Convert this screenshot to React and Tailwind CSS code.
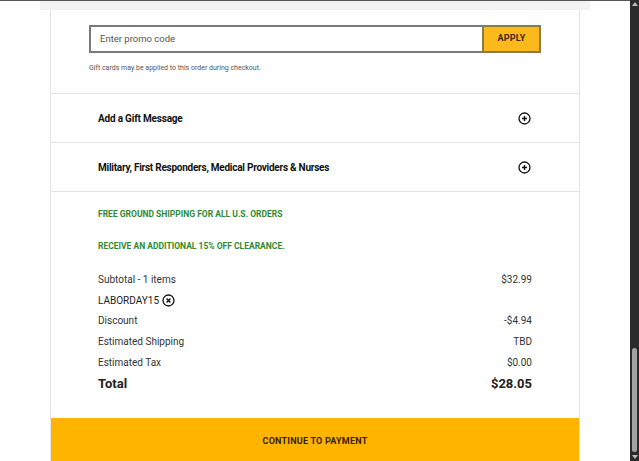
import React from 'react'

const font = { fontFamily: '"Liberation Sans Narrow", "Roboto", "Liberation Sans", sans-serif' }

const PlusCircle = () => (
    <svg width="13" height="13" viewBox="0 0 13 13" fill="none">
        <circle cx="6.5" cy="6.5" r="5.5" stroke="#111" strokeWidth="1.3" />
        <path d="M6.5 4v5M4 6.5h5" stroke="#111" strokeWidth="1.4" />
    </svg>
)

const XCircle = () => (
    <svg width="13" height="13" viewBox="0 0 13 13" fill="none">
        <circle cx="6.5" cy="6.5" r="5.5" stroke="#111" strokeWidth="1.3" />
        <path d="M4.6 4.6l3.8 3.8M8.4 4.6l-3.8 3.8" stroke="#111" strokeWidth="1.4" />
    </svg>
)

const Row = ({ label, value }) => (
    <div className="flex h-[21px] items-center justify-between text-[10px] text-[#333]">
        <span>{label}</span>
        <span>{value}</span>
    </div>
)

export default function App() {
    return (
        <div className="flex h-[461px] w-[639px] overflow-hidden bg-white" style={font}>
            {/* page */}
            <div className="flex flex-1 flex-col overflow-hidden border-t border-[#555]">
                <div className="mx-[40px] h-[9px] shrink-0 bg-[#f3f3f3]" />
                <div className="mx-[50px] flex flex-col border-x border-[#e4e4e4]">
                    {/* promo */}
                    <div className="px-[38px] pt-[15px] pb-[19px]">
                        <div className="flex h-[28px]">
                            <div className="flex flex-1 items-center border-2 border-r-0 border-[#7a7a7a] pl-[9px] text-[9.5px] text-[#555]">
                                Enter promo code
                            </div>
                            <button className="w-[59px] border-2 border-[#8b7a4a] bg-[#fbb91c] text-[9px] font-bold tracking-wide text-[#3a2a10]">
                                APPLY
                            </button>
                        </div>
                        <p className="mt-[10px] text-[7px] text-[#555]">Gift cards may be applied to this order during checkout.</p>
                    </div>

                    {/* accordions */}
                    <div className="flex h-[50px] items-center justify-between border-y border-[#e4e4e4] pt-[2px] pl-[47px] pr-[48px]">
                        <span className="text-[10px] font-bold tracking-[-0.2px] text-[#111]">Add a Gift Message</span>
                        <PlusCircle />
                    </div>
                    <div className="flex h-[49px] items-center justify-between border-b border-[#e4e4e4] pt-[2px] pl-[47px] pr-[48px]">
                        <span className="text-[10px] font-bold tracking-[-0.25px] text-[#111]">Military, First Responders, Medical Providers &amp; Nurses</span>
                        <PlusCircle />
                    </div>

                    {/* summary */}
                    <div className="flex h-[226px] shrink-0 flex-col px-[47px] pt-[16px]">
                        <p className="text-[8.5px] font-bold text-[#2e8b2e]">FREE GROUND SHIPPING FOR ALL U.S. ORDERS</p>
                        <p className="mt-[20px] text-[8.5px] font-bold text-[#2e8b2e]">RECEIVE AN ADDITIONAL 15% OFF CLEARANCE.</p>
                        <div className="mt-[16px]">
                            <Row label="Subtotal - 1 items" value="$32.99" />
                            <div className="flex h-[20px] items-center gap-[3px] text-[10px] text-[#222]">
                                <span>LABORDAY15</span>
                                <XCircle />
                            </div>
                            <Row label="Discount" value="-$4.94" />
                            <Row label="Estimated Shipping" value="TBD" />
                            <Row label="Estimated Tax" value="$0.00" />
                            <div className="flex h-[21px] items-center justify-between text-[13px] font-bold text-[#222]">
                                <span>Total</span>
                                <span>$28.05</span>
                            </div>
                        </div>
                    </div>

                    <button className="h-[48px] shrink-0 bg-[#ffb400] pt-[1px] text-[9px] font-bold tracking-wide text-[#3a1a0a]">
                        CONTINUE TO PAYMENT
                    </button>
                </div>
            </div>

            {/* scrollbar */}
            <div className="flex w-[9px] flex-col items-center bg-[#2b2b2b] py-[2px]">
                <div className="h-0 w-0 border-x-[3px] border-b-[4px] border-x-transparent border-b-[#bbb]" />
                <div className="flex-1" />
                <div className="h-[104px] w-[5px] rounded-full bg-[#a3a3a3]" />
                <div className="h-[3px]" />
                <div className="h-0 w-0 border-x-[3px] border-t-[4px] border-x-transparent border-t-[#bbb]" />
            </div>
        </div>
    )
}
